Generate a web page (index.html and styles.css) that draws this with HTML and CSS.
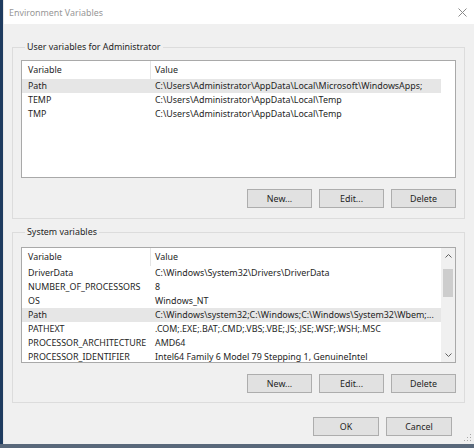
FILE: index.html
```html
<!DOCTYPE html>
<html lang="en">
<head>
<meta charset="utf-8">
<title>Environment Variables</title>
<link rel="stylesheet" href="styles.css">
</head>
<body>
<div class="screen">
  <div class="window">
    <div class="titlebar">
      <span class="title">Environment Variables</span>
      <svg class="close" width="9" height="9" viewBox="0 0 9 9"><path d="M0.5 0.5 L8.5 8.5 M8.5 0.5 L0.5 8.5" stroke="#8a8a8a" stroke-width="1" fill="none"/></svg>
    </div>
    <div class="content">
      <section class="group group-user">
        <div class="group-title"><span class="group-label">User variables for Administrator</span></div>
        <div class="list list-user">
          <div class="cols">
            <div class="row head"><div class="c1">Variable</div><div class="c2">Value</div></div>
            <div class="row sel"><div class="c1">Path</div><div class="c2">C:\Users\Administrator\AppData\Local\Microsoft\WindowsApps;</div></div>
            <div class="row"><div class="c1">TEMP</div><div class="c2">C:\Users\Administrator\AppData\Local\Temp</div></div>
            <div class="row"><div class="c1">TMP</div><div class="c2">C:\Users\Administrator\AppData\Local\Temp</div></div>
          </div>
        </div>
        <div class="buttons">
          <button class="btn">New...</button>
          <button class="btn">Edit...</button>
          <button class="btn">Delete</button>
        </div>
      </section>

      <section class="group group-system">
        <div class="group-title"><span class="group-label">System variables</span></div>
        <div class="list list-system">
          <div class="cols">
            <div class="row head"><div class="c1">Variable</div><div class="c2">Value</div></div>
            <div class="row"><div class="c1">DriverData</div><div class="c2">C:\Windows\System32\Drivers\DriverData</div></div>
            <div class="row"><div class="c1">NUMBER_OF_PROCESSORS</div><div class="c2">8</div></div>
            <div class="row"><div class="c1">OS</div><div class="c2">Windows_NT</div></div>
            <div class="row sel"><div class="c1">Path</div><div class="c2">C:\Windows\system32;C:\Windows;C:\Windows\System32\Wbem;...</div></div>
            <div class="row"><div class="c1">PATHEXT</div><div class="c2">.COM;.EXE;.BAT;.CMD;.VBS;.VBE;.JS;.JSE;.WSF;.WSH;.MSC</div></div>
            <div class="row"><div class="c1">PROCESSOR_ARCHITECTURE</div><div class="c2">AMD64</div></div>
            <div class="row"><div class="c1">PROCESSOR_IDENTIFIER</div><div class="c2">Intel64 Family 6 Model 79 Stepping 1, GenuineIntel</div></div>
          </div>
          <div class="scrollbar">
            <svg class="arrow" width="7" height="4" viewBox="0 0 7 4"><polyline points="0.5,3.5 3.5,0.5 6.5,3.5" stroke="#606060" fill="none"/></svg>
            <div class="track"><div class="thumb"></div></div>
            <svg class="arrow" width="7" height="4" viewBox="0 0 7 4"><polyline points="0.5,0.5 3.5,3.5 6.5,0.5" stroke="#606060" fill="none"/></svg>
          </div>
        </div>
        <div class="buttons">
          <button class="btn">New...</button>
          <button class="btn">Edit...</button>
          <button class="btn">Delete</button>
        </div>
      </section>

      <div class="dialog-buttons">
        <button class="btn wide">OK</button>
        <button class="btn wide">Cancel</button>
      </div>
    </div>
    <svg class="grip" width="8" height="8" viewBox="0 0 8 8">
      <rect x="6" y="0" width="1" height="1" fill="#a8a8a8"/>
      <rect x="3" y="3" width="1" height="1" fill="#a8a8a8"/>
      <rect x="6" y="3" width="1" height="1" fill="#a8a8a8"/>
      <rect x="0" y="6" width="1" height="1" fill="#a8a8a8"/>
      <rect x="3" y="6" width="1" height="1" fill="#a8a8a8"/>
      <rect x="6" y="6" width="1" height="1" fill="#a8a8a8"/>
    </svg>
  </div>
  <div class="desk-edge"></div>
</div>
</body>
</html>
```

FILE: styles.css
```css
* {
  box-sizing: border-box;
}

html, body {
  margin: 0;
  padding: 0;
}

body {
  width: 474px;
  height: 448px;
  overflow: hidden;
  background: #1e3b5f;
  font-family: "Noto Sans", "DejaVu Sans", sans-serif;
  font-size: 8.9px;
  color: #1e1e1e;
}

.screen {
  display: flex;
  flex-direction: column;
  height: 448px;
}

.window {
  position: relative;
  margin-left: 3px;
  height: 444px;
  background: #f0f0f0;
  border-left: 1px solid #e6e6e6;
  display: flex;
  flex-direction: column;
}

.desk-edge {
  height: 4px;
  background: #59687a;
}

/* title bar */
.titlebar {
  flex: none;
  height: 24px;
  background: #ffffff;
  display: flex;
  align-items: center;
  justify-content: space-between;
  padding: 0 7px 0 5px;
}

.title {
  color: #979797;
}

.close {
  display: block;
}

/* dialog body */
.content {
  flex: 1;
  padding: 23px 9px 0 8px;
}

/* etched group box with its caption sitting on the top edge */
.group {
  border: 1px solid #dcdcdc;
  padding: 0 8px 10px 8px;
}

.group-title {
  height: 14px;
  margin-top: -8px;
}

.group-label {
  display: inline-block;
  vertical-align: top;
  margin-left: 4px;
  padding: 0 2px;
  line-height: 14px;
  background: #f0f0f0;
}

.group-user .list {
  margin-top: 6px;
}

.group-system {
  margin-top: 13px;
  padding-bottom: 9px;
}

.group-system .list {
  margin-top: 8px;
}

/* list views */
.list {
  background: #ffffff;
  border: 1px solid #a9a9a9;
  display: flex;
  overflow: hidden;
}

.list-user {
  height: 118px;
}

.list-system {
  height: 116px;
}

.cols {
  width: 419px;
  flex: none;
}

.row {
  display: flex;
  height: 14px;
  line-height: 14px;
  white-space: nowrap;
}

.row.head {
  height: 18px;
  line-height: 18px;
}

.row.head .c1 {
  border-right: 1px solid #e5e5e5;
}

.row.sel {
  background: #e6e6e6;
}

.c1 {
  width: 129px;
  flex: none;
  padding-left: 6px;
  overflow: hidden;
}

.c2 {
  flex: 1;
  padding-left: 4px;
  overflow: hidden;
}

.scrollbar {
  flex: 1;
  background: #f0f0f0;
  display: flex;
  flex-direction: column;
  align-items: center;
  padding: 6px 0 5px;
}

.arrow {
  display: block;
  flex: none;
}

.track {
  flex: 1;
  width: 100%;
  padding: 11px 2px 0;
}

.thumb {
  height: 28px;
  background: #cdcdcd;
}

/* buttons */
.buttons {
  display: flex;
  justify-content: flex-end;
  gap: 7px;
  margin-top: 11px;
}

.btn {
  width: 65px;
  height: 19px;
  padding: 0;
  margin: 0;
  background: #e1e1e1;
  border: 1px solid #adadad;
  font-family: inherit;
  font-size: 8.9px;
  color: #1e1e1e;
}

.btn.wide {
  width: 66px;
}

.dialog-buttons {
  display: flex;
  justify-content: flex-end;
  gap: 7px;
  margin-top: 14px;
  padding-right: 13px;
}

.grip {
  position: absolute;
  right: 2px;
  bottom: 2px;
}
```
